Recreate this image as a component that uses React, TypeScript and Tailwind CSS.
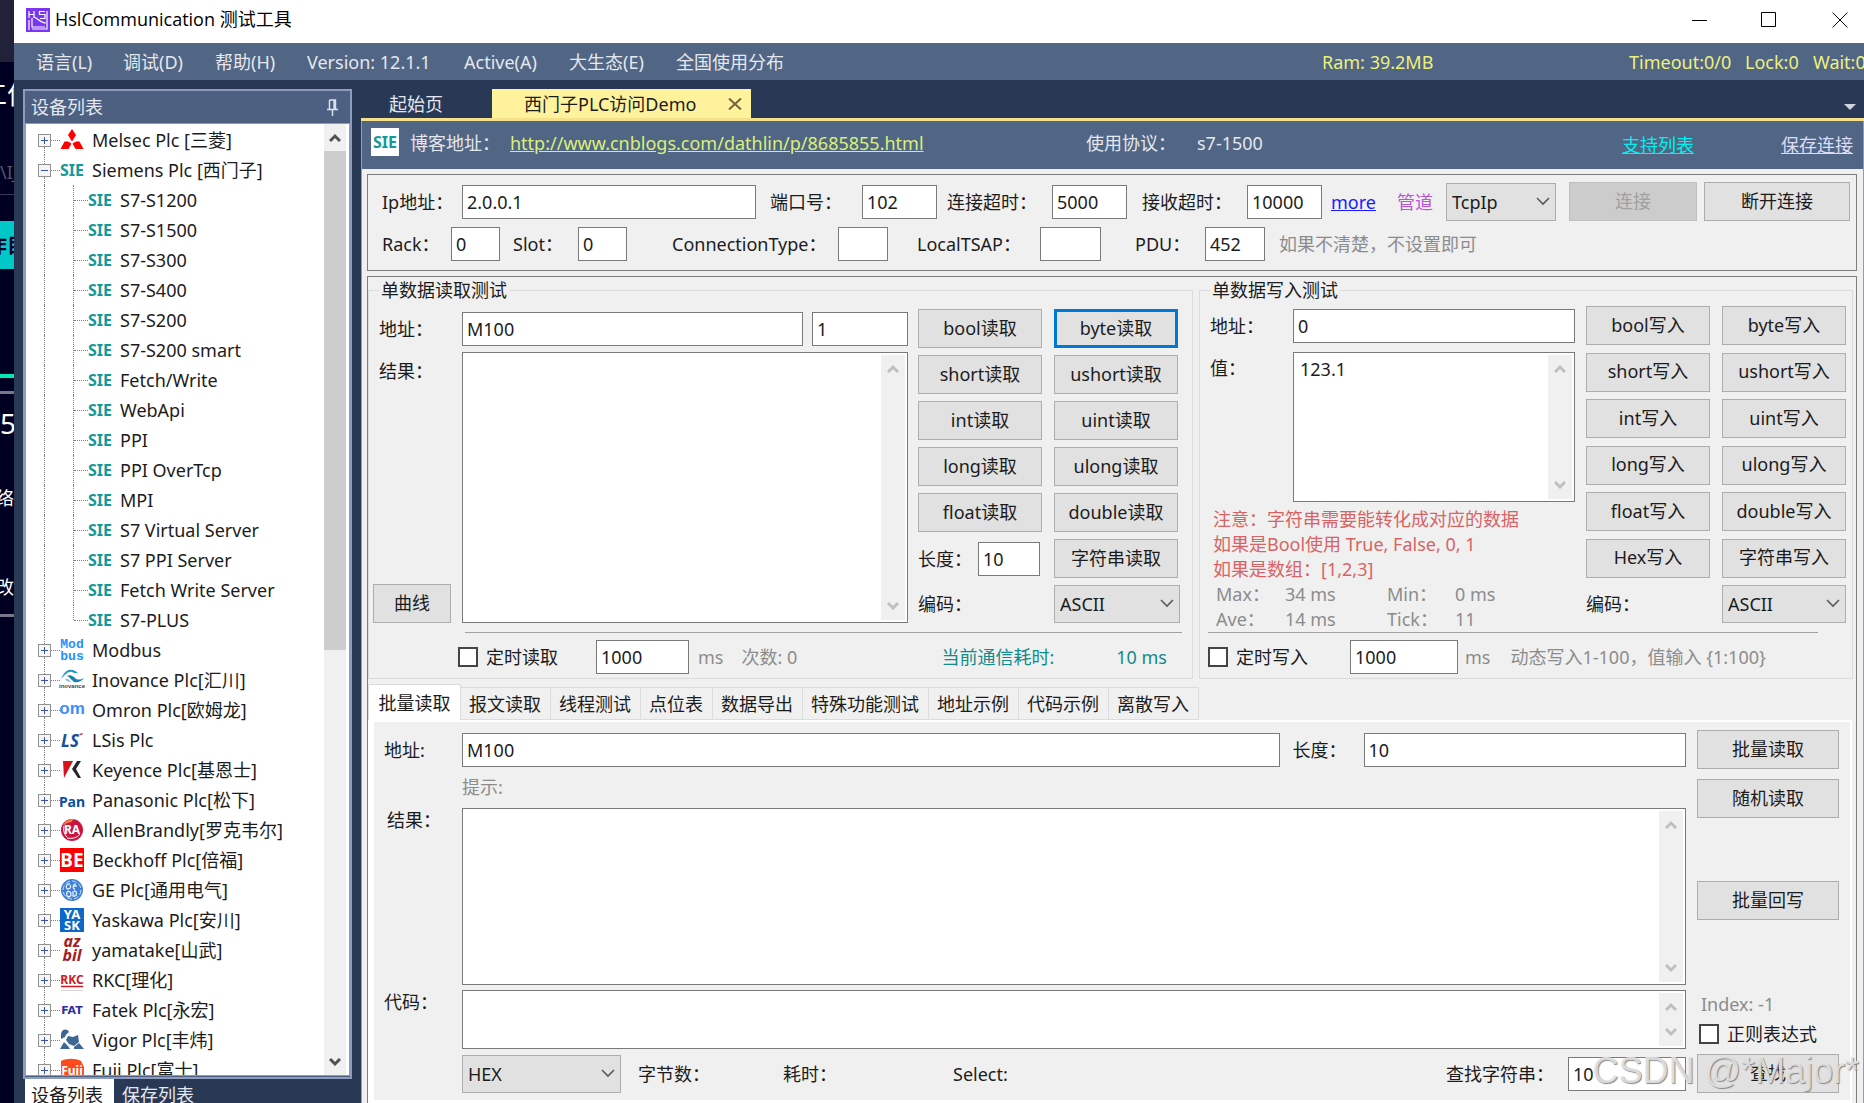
import React from 'react';

const FONT = "font-['Noto_Sans','Noto_Sans_CJK_SC',sans-serif]";

const LogoText = ({ children, y = 17, size = 15, color = '#129a9a', x = 12, family = 'Noto Sans', italic = false }: any) => (
  <text
    x={x}
    y={y}
    fontSize={size}
    fill={color}
    textAnchor="middle"
    fontWeight="700"
    fontFamily={family}
    fontStyle={italic ? 'italic' : 'normal'}
  >
    {children}
  </text>
);

const logos: Record<string, React.ReactNode> = {
  melsec: (
    <g fill="#ff0000">
      <path d="M12 1l4 6-4 6.500-4-6.500z" />
      <path d="M8 13.500l3.500 2L8.500 21H.5l4-7.500z" />
      <path d="M16 13.500l-3.500 2L15.500 21h8l-4-7.500z" />
    </g>
  ),
  sie: <LogoText y={18} size={16}>SIE</LogoText>,
  modbus: (
    <>
      <LogoText y={10} size={13} color="#1e90ff" family="Liberation Mono">Mod</LogoText>
      <LogoText y={22} size={13} color="#1e90ff" family="Liberation Mono">bus</LogoText>
    </>
  ),
  inovance: (
    <>
      <path d="M1 11C4 4 8 1 12 2c3 0 3 2 6 2-2 2-4 1-6 0-4-1-7 3-11 7z" fill="#1d9ac0" />
      <path d="M7 8c3-2 6 0 8 2s5 2 9 0c-3 4-7 5-10 4-3-2-4-5-7-6z" fill="#1c7fb4" />
      <path d="M5 11c2-1 4 0 6 3-3 0-5-1-6-3z" fill="#7cc6dc" />
      <LogoText y={20} size={6} color="#3c4650" family="Liberation Sans">inovance</LogoText>
    </>
  ),
  omron: <LogoText y={16} size={17} color="#3a8dff" family="Liberation Sans">om</LogoText>,
  ls: (
    <>
      <LogoText x={10} y={19} size={17} color="#17509c" italic>LS</LogoText>
      <path d="M19 6l4-1-1 2-2 0z" fill="#e0303a" />
    </>
  ),
  keyence: (
    <>
      <path d="M3 3h10L4 20z" fill="#d8101c" />
      <path d="M21 3h-4l-5 8 6 9h3l-5-9z" fill="#26262a" />
    </>
  ),
  pan: <LogoText y={19} size={14} color="#0b4ea2">Pan</LogoText>,
  ra: (
    <>
      <circle cx="12" cy="12" r="11" fill="#cc1440" />
      <path d="M3 8C5 3 9 1 14 1l-3 3-4 1z" fill="#f58a3c" />
      <path d="M4 8c-1 4 0 8 3 11M7 20c5 1 10 0 13-4" fill="none" stroke="#fff" strokeWidth="1" />
      <LogoText y={16} size={12} color="#fff">RA</LogoText>
    </>
  ),
  be: (
    <>
      <rect width="24" height="24" fill="#ff0000" />
      <LogoText y={19} size={19} color="#fff">BE</LogoText>
    </>
  ),
  ge: (
    <>
      <circle cx="12" cy="12" r="11" fill="#3d7fd6" />
      <circle cx="12" cy="12" r="9" fill="none" stroke="#cfe0f8" strokeWidth="1" strokeDasharray="5 2" />
      <path d="M10 6c-4-1-5 5-2 5s3-3 2-4M16 6c-3-1-4 5-1 5M13 8h4M7 17c-2-4 4-5 4-1s-4 3-4 1M13 13v5c4 1 5-5 1-5" fill="none" stroke="#e8f1ff" strokeWidth="1.300" />
    </>
  ),
  yask: (
    <>
      <rect width="24" height="24" fill="#0f68c8" />
      <LogoText y={11} size={13} color="#fff">YA</LogoText>
      <LogoText y={22} size={13} color="#fff">SK</LogoText>
    </>
  ),
  azbil: (
    <>
      <LogoText y={9} size={16} color="#a51d22" italic>az</LogoText>
      <LogoText y={23} size={16} color="#a51d22" italic>bil</LogoText>
    </>
  ),
  rkc: (
    <>
      <LogoText y={16} size={12} color="#cf1d24">RKC</LogoText>
      <path d="M1 18.500h22" stroke="#cf1d24" strokeWidth="1.500" />
      <path d="M1 22.500h22" stroke="#d8d8d8" strokeWidth="1" />
    </>
  ),
  fat: <LogoText y={16} size={11} color="#2f2f9c" family="DejaVu Sans">FAT</LogoText>,
  vigor: (
    <g fill="#3f6796">
      <path d="M1 7C1 1 7 0 9 4c-1 1-3 2-4 5l-4 2z" />
      <path d="M8 8l5 1 5-2 1 7-5 4-5-2-3-4z" />
      <path d="M0 21l4-7 4 4 2 3zM14 21l0-2 5-4 5 6z" />
    </g>
  ),
  fuji: (
    <>
      <path d="M1 3c6-3 14-3 20 0l3 6v14H1z" fill="#ff4a1c" />
      <LogoText y={17} size={12} color="#fff">Fuji</LogoText>
    </>
  ),
};

const Logo = ({ name }: { name: string }) => (
  <svg viewBox="0 0 24 24" className="w-6 h-6 shrink-0 overflow-visible">{logos[name]}</svg>
);

const siemens = [
  'S7-S1200', 'S7-S1500', 'S7-S300', 'S7-S400', 'S7-S200', 'S7-S200 smart', 'Fetch/Write', 'WebApi',
  'PPI', 'PPI OverTcp', 'MPI', 'S7 Virtual Server', 'S7 PPI Server', 'Fetch Write Server', 'S7-PLUS',
];

const devices = [
  { name: 'Melsec Plc [三菱]', logo: 'melsec' },
  { name: 'Siemens Plc [西门子]', logo: 'sie', children: siemens },
  { name: 'Modbus', logo: 'modbus' },
  { name: 'Inovance Plc[汇川]', logo: 'inovance' },
  { name: 'Omron Plc[欧姆龙]', logo: 'omron' },
  { name: 'LSis Plc', logo: 'ls' },
  { name: 'Keyence Plc[基恩士]', logo: 'keyence' },
  { name: 'Panasonic Plc[松下]', logo: 'pan' },
  { name: 'AllenBrandly[罗克韦尔]', logo: 'ra' },
  { name: 'Beckhoff Plc[倍福]', logo: 'be' },
  { name: 'GE Plc[通用电气]', logo: 'ge' },
  { name: 'Yaskawa Plc[安川]', logo: 'yask' },
  { name: 'yamatake[山武]', logo: 'azbil' },
  { name: 'RKC[理化]', logo: 'rkc' },
  { name: 'Fatek Plc[永宏]', logo: 'fat' },
  { name: 'Vigor Plc[丰炜]', logo: 'vigor' },
  { name: 'Fuji Plc[富士]', logo: 'fuji' },
];

const Arrow = ({ up = false, className = 'text-[#bfbfbf]' }: { up?: boolean; className?: string }) => (
  <svg viewBox="0 0 12 10" className={`w-3 h-[10px] ${className}`} fill="none" stroke="currentColor" strokeWidth="3">
    <path d={up ? 'M1 8l5-5 5 5' : 'M1 2l5 5 5-5'} />
  </svg>
);

const Button = ({ children, className = '', ...rest }: React.ButtonHTMLAttributes<HTMLButtonElement>) => (
  <button
    className={`h-[39px] shrink-0 bg-[#e1e1e1] border border-[#adadad] text-center whitespace-nowrap pb-[2px] disabled:bg-[#cccccc] disabled:border-[#bfbfbf] disabled:text-[#a0a0a0] ${className}`}
    {...rest}
  >
    {children}
  </button>
);

const Input = ({ className = '', ...rest }: React.InputHTMLAttributes<HTMLInputElement>) => (
  <input className={`h-[34px] min-w-0 border border-[#7a7a7a] px-1 bg-white ${className}`} {...rest} />
);

const Select = ({ id, value, className = '' }: { id: string; value: string; className?: string }) => (
  <div className={`relative h-[38px] shrink-0 ${className}`}>
    <select id={id} className="appearance-none w-full h-full bg-[#e1e1e1] border border-[#adadad] pl-[5px]">
      <option>{value}</option>
    </select>
    <svg viewBox="0 0 14 9" className="absolute right-[6px] top-[14px] w-[14px] h-[9px] pointer-events-none" fill="none" stroke="#5a5a5a" strokeWidth="1.600">
      <path d="M1 1l6 6 6-6" />
    </svg>
  </div>
);

const TextArea = ({ id, value = '', className = '' }: { id: string; value?: string; className?: string }) => (
  <div className={`flex border border-[#7a7a7a] bg-white p-[2px] ${className}`}>
    <textarea id={id} defaultValue={value} className="flex-1 min-w-0 h-full resize-none overflow-hidden pl-1 pt-[2px] outline-none" />
    <div className="w-6 bg-[#f0f0f0] flex flex-col items-center justify-between py-[9px]">
      <Arrow up />
      <Arrow />
    </div>
  </div>
);

const CheckBox = ({ id, children }: { id: string; children: React.ReactNode }) => (
  <>
    <input id={id} type="checkbox" className="appearance-none w-5 h-5 shrink-0 border-2 border-[#444] bg-white" />
    <label htmlFor={id} className="ml-2 whitespace-nowrap">{children}</label>
  </>
);

const Desktop = () => (
  <div className="w-[14px] shrink-0 bg-[#000022] text-white overflow-hidden flex flex-col whitespace-nowrap">
    <div className="h-[62px] bg-[#22213a] shrink-0" />
    <div className="h-[70px] pt-4 text-[26px] leading-8 flex justify-center"><span>工作</span></div>
    <div className="h-[63px] pt-7 text-[#55566c] border-b border-[#3a3a52]">\IJ</div>
    <div className="h-[26px]" />
    <div className="h-12 bg-[#00c8c8] text-[#000022] font-bold text-[20px] leading-[50px] flex justify-center shrink-0"><span>作目</span></div>
    <div className="h-[109px] border-b-4 border-[#00e8b0]" />
    <div className="h-4 border-b-[3px] border-[#77778a]" />
    <div className="h-[62px] text-[28px] leading-[58px]">5</div>
    <div className="h-[84px] leading-[84px] flex justify-end"><span>络</span></div>
    <div className="h-[94px] leading-[94px] flex justify-end"><span>改</span></div>
    <div className="mt-[-20px] border-t-[3px] border-[#77778a]" />
  </div>
);

const TitleBar = () => (
  <header className="h-[43px] shrink-0 bg-white flex items-center pl-3 text-black">
    <svg viewBox="0 0 24 24" className="w-6 h-6 mb-1" fill="none" stroke="#fff" strokeWidth="1.200">
      <rect width="24" height="24" fill="#7a35f5" stroke="none" />
      <path d="M3 3v7M8 3v7M3 6.500h5M19 3.500h-5.500v3H19v4h-5M21 3v18H6M3 12v10M6 10v9h13M8 9c3 1 7 6 12 6" />
    </svg>
    <h1 className="ml-[5px] mb-[6px] font-['Open_Sans','Noto_Sans_CJK_SC',sans-serif]">HslCommunication 测试工具</h1>
    <div className="ml-auto mb-1 flex">
      <button aria-label="minimize" className="w-[69px] h-[38px] flex items-center justify-center"><svg viewBox="0 0 16 16" className="w-4 h-4"><path d="M0 8.500h15" stroke="#000" /></svg></button>
      <button aria-label="maximize" className="w-[70px] h-[38px] flex items-center justify-center"><svg viewBox="0 0 16 16" className="w-4 h-4"><path d="M.5.5h14v14H.5z" fill="none" stroke="#000" /></svg></button>
      <button aria-label="close" className="w-[60px] h-[38px] flex items-center justify-center pl-3"><svg viewBox="0 0 16 16" className="w-4 h-4"><path d="M.5.5l15 15M15.500.500l-15 15" stroke="#000" /></svg></button>
    </div>
  </header>
);

const MenuBar = () => (
  <nav className="h-[37px] shrink-0 bg-[#516584] text-[#e4e8ee] flex items-center pl-[22px] whitespace-nowrap overflow-hidden">
    <button className="w-[87px] text-left">语言(L)</button>
    <button className="w-[92px] text-left">调试(D)</button>
    <button className="w-[92px] text-left">帮助(H)</button>
    <button className="w-[157px] text-left">Version: 12.1.1</button>
    <button className="w-[105px] text-left">Active(A)</button>
    <button className="w-[107px] text-left">大生态(E)</button>
    <button className="text-left">全国使用分布</button>
    <div className="ml-auto flex text-[#eef07c]">
      <span className="w-[307px]">Ram: 39.2MB</span>
      <span className="w-[116px]">Timeout:0/0</span>
      <span className="w-[68px]">Lock:0</span>
      <span className="w-[51px]">Wait:0</span>
    </div>
  </nav>
);

const dots = 'border-dotted border-[#808080]';

const DevicePanel = () => (
  <aside className="w-[329px] shrink-0 flex flex-col pt-[9px]">
    <div className="flex-1 min-h-0 flex flex-col border-2 border-[#8e9bbc] bg-[#4d6082]">
      <div className="h-8 shrink-0 flex items-center justify-between pl-[6px] pr-3 text-[#e4e8ee]">
        <h2>设备列表</h2>
        <svg viewBox="0 0 11 17" className="w-[11px] h-[17px]" fill="none" stroke="#dfe5f0" strokeWidth="1.400">
          <path d="M2.500 1h6v9M2.500 1v9M7 1v9M0 10.500h11M5.500 11v6" />
        </svg>
      </div>
      <div className="flex-1 min-h-0 flex bg-white border border-[#9a9a9a] mb-[1px]">
        <ul className="flex-1 min-w-0 overflow-hidden text-[#1c1c1c] whitespace-nowrap pl-3 pt-px">
          {devices.map((d, i) => (
            <li key={d.name}>
              <div className="flex items-center h-[30px]">
                <div className="w-[13px] h-full flex flex-col items-center">
                  <div className={`flex-1 border-l ${i === 0 ? 'border-transparent' : dots}`} />
                  <button aria-label="toggle" className="w-[13px] h-[13px] bg-[#f6f6f6] border border-[#919191]">
                    <svg viewBox="0 0 11 11" className="w-[11px] h-[11px]">
                      <path d={d.children ? 'M2 5.500h7' : 'M2 5.500h7M5.500 2v7'} stroke="#3a55a4" />
                    </svg>
                  </button>
                  <div className={`flex-1 border-l ${dots}`} />
                </div>
                <div className={`w-[9px] border-t ${dots}`} />
                <Logo name={d.logo} />
                <span className="ml-2">{d.name}</span>
              </div>
              {d.children && (
                <ul>
                  {d.children.map((c, n) => (
                    <li key={c} className="flex items-center h-[30px]">
                      <div className={`ml-[6px] h-full border-l ${dots}`} />
                      <div className={`ml-7 border-l ${dots} ${n === siemens.length - 1 ? 'h-1/2 self-start' : 'h-full'}`} />
                      <div className={`w-[14px] border-t ${dots}`} />
                      <Logo name="sie" />
                      <span className="ml-2">{c}</span>
                    </li>
                  ))}
                </ul>
              )}
            </li>
          ))}
        </ul>
        <div className="w-[25px] pr-[3px] flex flex-col">
          <div className="flex-1 bg-[#f0f0f0] flex flex-col items-center">
            <div className="h-[27px] flex items-center"><Arrow up className="text-[#505050]" /></div>
            <div className="w-full h-[499px] bg-[#cdcdcd]" />
            <div className="mt-auto h-[26px] flex items-center"><Arrow className="text-[#505050]" /></div>
          </div>
        </div>
      </div>
    </div>
    <div className="flex h-6 overflow-hidden shrink-0 ml-[2px]">
      <button className="bg-white w-[89px] pl-[6px] text-left leading-8">设备列表</button>
      <button className="text-[#e4e8ee] pl-2 leading-8">保存列表</button>
    </div>
  </aside>
);

const DocTabs = () => (
  <div className="flex h-[38px] shrink-0 items-end">
    <button className="w-[131px] h-[29px] pl-7 text-left text-[#e4e8ee]">起始页</button>
    <div className="w-[259px] h-[29px] bg-[#fff29d] flex items-center pl-8 text-[#1c1c1c]">
      <button>西门子PLC访问Demo</button>
      <button aria-label="close tab" className="ml-auto mr-[9px]">
        <svg viewBox="0 0 14 12" className="w-[14px] h-3" stroke="#75633d" strokeWidth="2"><path d="M1 .5l12 11M13 .5l-12 11" /></svg>
      </button>
    </div>
    <svg viewBox="0 0 12 6" className="w-3 h-[6px] ml-auto mr-2 mb-2"><path d="M0 0h12L6 6z" fill="#ced4dd" /></svg>
  </div>
);

const DocHeader = () => (
  <div className="h-12 shrink-0 bg-[#516584] flex items-center pl-[9px] pr-[10px] text-[#e4e8ee] whitespace-nowrap">
    <div className="w-7 h-7 bg-white flex items-center justify-center mb-[6px]"><Logo name="sie" /></div>
    <span className="w-[100px] ml-[11px] mb-1">博客地址：</span>
    <a href="http://www.cnblogs.com/dathlin/p/8685855.html" className="w-[576px] mb-1 underline text-[#d9f07a]">
      http://www.cnblogs.com/dathlin/p/8685855.html
    </a>
    <span className="w-[111px] mb-1">使用协议：</span>
    <span className="mb-1">s7-1500</span>
    <a href="#" className="ml-auto underline text-[#00f0f0]">支持列表</a>
    <a href="#" className="ml-[87px] underline text-[#dcdcf4]">保存连接</a>
  </div>
);

const ConnectionPanel = () => (
  <section className="border border-[#7f7f7f] shrink-0 pt-[7px] pb-[9px] pl-[14px] pr-[6px] whitespace-nowrap">
    <div className="flex items-center h-[39px]">
      <label htmlFor="ip" className="w-[80px] shrink-0">Ip地址：</label>
      <Input id="ip" defaultValue="2.0.0.1" className="flex-1" />
      <label htmlFor="port" className="w-[92px] ml-[14px] shrink-0">端口号：</label>
      <Input id="port" defaultValue="102" className="w-[75px]" />
      <label htmlFor="timeout" className="w-[105px] ml-[10px] shrink-0">连接超时：</label>
      <Input id="timeout" defaultValue="5000" className="w-[75px]" />
      <label htmlFor="receive" className="w-[105px] ml-[15px] shrink-0">接收超时：</label>
      <Input id="receive" defaultValue="10000" className="w-[75px]" />
      <a href="#" className="ml-[9px] w-[66px] text-[#1a1aff] underline">more</a>
      <label htmlFor="pipe" className="w-[49px] text-[#ba55d3]">管道</label>
      <Select id="pipe" value="TcpIp" className="w-[110px]" />
      <Button disabled className="w-[128px] ml-[13px]">连接</Button>
      <Button className="w-[146px] ml-[7px]">断开连接</Button>
    </div>
    <div className="flex items-center mt-[6px] h-[34px]">
      <label htmlFor="rack" className="w-[69px]">Rack：</label>
      <Input id="rack" defaultValue="0" className="w-[49px]" />
      <label htmlFor="slot" className="w-[65px] ml-[13px]">Slot：</label>
      <Input id="slot" defaultValue="0" className="w-[49px]" />
      <label htmlFor="ctype" className="w-[166px] ml-[45px]">ConnectionType：</label>
      <Input id="ctype" className="w-[50px]" />
      <label htmlFor="tsap" className="w-[123px] ml-[29px]">LocalTSAP：</label>
      <Input id="tsap" className="w-[61px]" />
      <label htmlFor="pdu" className="w-[70px] ml-[34px]">PDU：</label>
      <Input id="pdu" defaultValue="452" readOnly className="w-[60px] bg-[#f0f0f0]" />
      <span className="ml-[14px] text-[#8c8c8c]">如果不清楚，不设置即可</span>
    </div>
  </section>
);

const ReadGroup = () => (
  <fieldset className="border border-[#dcdcdc] pb-1 min-w-0 flex flex-col whitespace-nowrap">
    <legend className="ml-[10px] px-[2px] leading-6">单数据读取测试</legend>
    <div className="flex pr-[14px] flex-1">
      <div className="w-[93px] shrink-0 flex flex-col items-start pt-[15px]">
        <label htmlFor="raddr" className="ml-[10px] leading-6">地址：</label>
        <label htmlFor="rresult" className="ml-[10px] leading-6 mt-[18px]">结果：</label>
        <Button className="w-[78px] h-[38px] ml-[4px] mt-auto">曲线</Button>
      </div>
      <div className="flex-1 min-w-0 flex flex-col pt-[10px]">
        <div className="flex gap-[9px]">
          <Input id="raddr" defaultValue="M100" className="flex-1" />
          <Input aria-label="count" defaultValue="1" className="w-[96px]" />
        </div>
        <TextArea id="rresult" className="flex-1 mt-[6px]" />
      </div>
      <div className="ml-[10px] pt-[7px] grid grid-cols-[124px_124px] gap-x-3 content-between items-center">
        <Button>bool读取</Button>
        <Button className="outline-3 -outline-offset-3 outline-[#0078d7]">byte读取</Button>
        <Button>short读取</Button>
        <Button>ushort读取</Button>
        <Button>int读取</Button>
        <Button>uint读取</Button>
        <Button>long读取</Button>
        <Button>ulong读取</Button>
        <Button>float读取</Button>
        <Button>double读取</Button>
        <div className="flex items-center">
          <label htmlFor="rlen" className="w-[60px]">长度：</label>
          <Input id="rlen" defaultValue="10" className="w-[62px]" />
        </div>
        <Button>字符串读取</Button>
        <label htmlFor="renc">编码：</label>
        <Select id="renc" value="ASCII" className="w-[126px]" />
      </div>
    </div>
    <hr className="border-[#a0a0a0] mt-[9px] ml-[96px] mr-[10px]" />
    <div className="flex items-center mt-[7px] ml-[89px] pr-[25px]">
      <CheckBox id="rtimer">定时读取</CheckBox>
      <Input aria-label="interval" defaultValue="1000" className="w-[93px] ml-[38px]" />
      <span className="ml-[9px] text-[#8c8c8c]">ms</span>
      <span className="ml-[18px] text-[#8c8c8c]">次数: 0</span>
      <span className="ml-auto text-[#128a8a]">当前通信耗时:</span>
      <span className="ml-[62px] text-[#128a8a]">10 ms</span>
    </div>
  </fieldset>
);

const WriteGroup = () => (
  <fieldset className="border border-[#dcdcdc] pb-1 min-w-0 flex flex-col whitespace-nowrap">
    <legend className="ml-[10px] px-[2px] leading-6">单数据写入测试</legend>
    <div className="flex pr-[6px] flex-1">
      <div className="flex-1 min-w-0 pt-[7px]">
        <div className="flex items-center">
          <label htmlFor="waddr" className="w-[93px] pl-[10px] shrink-0">地址：</label>
          <Input id="waddr" defaultValue="0" className="flex-1" />
        </div>
        <div className="flex mt-[9px]">
          <label htmlFor="wval" className="w-[93px] pl-[10px] pt-1 shrink-0">值：</label>
          <TextArea id="wval" value="123.1" className="flex-1 h-[150px]" />
        </div>
        <p className="mt-[5px] pl-[13px] leading-[25px] text-[#d66464]">
          注意：字符串需要能转化成对应的数据<br />
          如果是Bool使用 True, False, 0, 1<br />
          如果是数组：[1,2,3]
        </p>
        <div className="grid grid-cols-[69px_102px_68px_1fr] pl-4 leading-[25px] text-[#8c8c8c]">
          <span>Max：</span><span>34 ms</span><span>Min：</span><span>0 ms</span>
          <span>Ave：</span><span>14 ms</span><span>Tick：</span><span>11</span>
        </div>
      </div>
      <div className="ml-[11px] pt-[4px] pb-[9px] grid grid-cols-[124px_124px] gap-x-3 content-between items-center">
        <Button>bool写入</Button>
        <Button>byte写入</Button>
        <Button>short写入</Button>
        <Button>ushort写入</Button>
        <Button>int写入</Button>
        <Button>uint写入</Button>
        <Button>long写入</Button>
        <Button>ulong写入</Button>
        <Button>float写入</Button>
        <Button>double写入</Button>
        <Button>Hex写入</Button>
        <Button>字符串写入</Button>
        <label htmlFor="wenc">编码：</label>
        <Select id="wenc" value="ASCII" className="w-[124px]" />
      </div>
    </div>
    <hr className="border-[#a0a0a0] ml-2 mr-[34px]" />
    <div className="flex items-center mt-[7px] ml-2">
      <CheckBox id="wtimer">定时写入</CheckBox>
      <Input aria-label="interval" defaultValue="1000" className="w-[108px] ml-[42px]" />
      <span className="ml-[7px] text-[#8c8c8c]">ms</span>
      <span className="ml-5 text-[#8c8c8c]">动态写入1-100，值输入 {'{1:100}'}</span>
    </div>
  </fieldset>
);

const tabs = ['报文读取', '线程测试', '点位表', '数据导出', '特殊功能测试', '地址示例', '代码示例', '离散写入'];

const BatchPanel = () => (
  <section className="flex-1 min-h-0 flex flex-col pt-[5px] pr-1 whitespace-nowrap">
    <div className="flex items-end h-9 shrink-0">
      <button className="h-9 w-[93px] bg-white border border-b-0 border-[#dcdcdc]">批量读取</button>
      {tabs.map((t) => (
        <button key={t} className="h-[33px] pl-[8px] pr-[9px] border border-l-0 border-[#dcdcdc]">{t}</button>
      ))}
    </div>
    <div className="flex-1 min-h-0 flex border-white border-l-[6px] border-t-2 border-b-[3px] border-r-2 pl-[10px] pr-[11px] pb-[7px]">
      <div className="flex-1 min-w-0 flex flex-col pt-[11px]">
        <div className="flex items-center">
          <label htmlFor="baddr" className="w-[78px]">地址:</label>
          <Input id="baddr" defaultValue="M100" className="flex-[822]" />
          <label htmlFor="blen" className="w-[71px] ml-[13px]">长度：</label>
          <Input id="blen" defaultValue="10" className="flex-[318]" />
        </div>
        <div className="h-[41px] pl-[78px] leading-[41px] text-[#8c8c8c] shrink-0">提示:</div>
        <div className="flex-1 min-h-0 flex">
          <label htmlFor="bresult" className="w-[78px] pl-[3px]">结果：</label>
          <TextArea id="bresult" className="flex-1" />
        </div>
        <div className="flex mt-[5px]">
          <label htmlFor="bcode" className="w-[78px]">代码：</label>
          <TextArea id="bcode" className="flex-1 h-[59px]" />
        </div>
        <div className="flex items-center mt-[6px] pl-[78px]">
          <Select id="format" value="HEX" className="w-[159px]" />
          <span className="w-[145px] ml-[17px]">字节数：</span>
          <span className="w-[170px]">耗时：</span>
          <span>Select:</span>
          <label htmlFor="find" className="w-[122px] ml-auto">查找字符串：</label>
          <Input id="find" defaultValue="10" className="w-[118px]" />
        </div>
      </div>
      <div className="w-[142px] ml-[11px] shrink-0 flex flex-col pt-[8px]">
        <Button>批量读取</Button>
        <Button className="mt-[10px]">随机读取</Button>
        <Button className="mt-[63px]">批量回写</Button>
        <span className="mt-auto pl-1 leading-6 text-[#8c8c8c]">Index: -1</span>
        <div className="flex items-center pl-[2px] h-9"><CheckBox id="regex">正则表达式</CheckBox></div>
        <Button className="mt-[2px]">查找</Button>
      </div>
    </div>
  </section>
);

const App = () => {
  return (
    <div className={`h-screen w-full flex overflow-hidden relative text-[18px] leading-[24px] text-[#1c1c1c] ${FONT}`}>
      <Desktop />
      <div className="flex-1 min-w-0 flex flex-col bg-[#293955]">
        <TitleBar />
        <MenuBar />
        <div className="flex-1 min-h-0 flex pl-[9px] gap-[9px]">
          <DevicePanel />
          <main className="flex-1 min-w-0 flex flex-col">
            <DocTabs />
            <div className="h-[3px] shrink-0 bg-[#f5e08c]" />
            <div className="flex-1 min-h-0 flex flex-col border-x border-[#8e9bbc] bg-[#f0f0f0]">
              <DocHeader />
              <div className="flex-1 min-h-0 flex flex-col gap-[5px] pl-[5px] pr-[6px] pt-[5px]">
                <ConnectionPanel />
                <section className="flex-1 min-h-0 flex flex-col border border-b-0 border-[#7f7f7f]">
                  <div className="grid grid-cols-[minmax(0,825fr)_minmax(0,654fr)] gap-[6px] pr-[3px] pt-px">
                    <ReadGroup />
                    <WriteGroup />
                  </div>
                  <BatchPanel />
                </section>
              </div>
            </div>
          </main>
        </div>
      </div>
      <div className="absolute right-[5px] bottom-[12px] text-[36px] leading-10 text-[#e4e4e4]/90 [text-shadow:1px_1px_1px_#888] pointer-events-none font-['Liberation_Sans',sans-serif]">
        CSDN @*Major*
      </div>
    </div>
  );
};

export default App;
